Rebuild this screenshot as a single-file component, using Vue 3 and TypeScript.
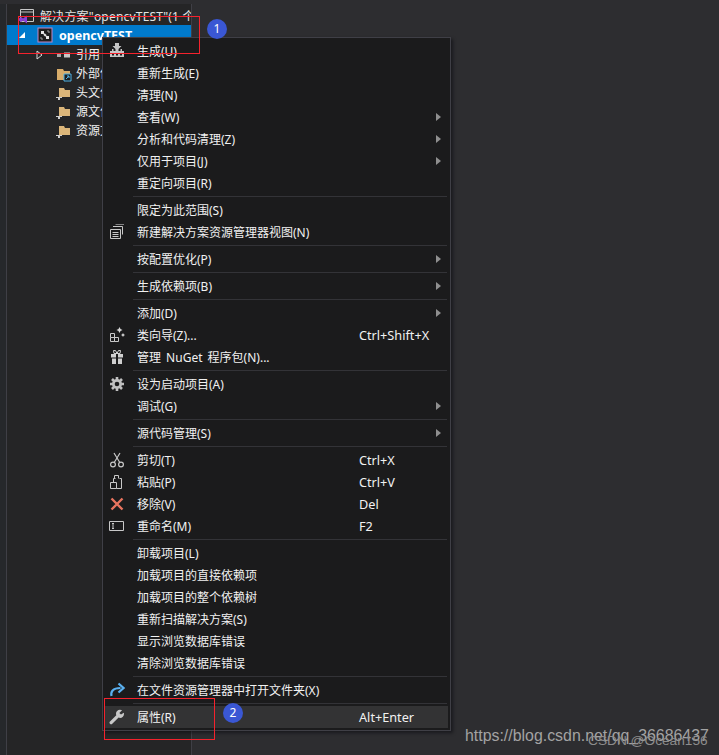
<script setup lang="ts">
type Row = { label?: string; key?: string; arrow?: boolean; icon?: string; sep?: boolean; active?: boolean };
const rows: Row[] = [
  { label: '生成(U)', icon: 'build' },
  { label: '重新生成(E)' },
  { label: '清理(N)' },
  { label: '查看(W)', arrow: true },
  { label: '分析和代码清理(Z)', arrow: true },
  { label: '仅用于项目(J)', arrow: true },
  { label: '重定向项目(R)' },
  { sep: true },
  { label: '限定为此范围(S)' },
  { label: '新建解决方案资源管理器视图(N)', icon: 'views' },
  { sep: true },
  { label: '按配置优化(P)', arrow: true },
  { sep: true },
  { label: '生成依赖项(B)', arrow: true },
  { sep: true },
  { label: '添加(D)', arrow: true },
  { label: '类向导(Z)...', key: 'Ctrl+Shift+X', icon: 'wizard' },
  { label: '管理 NuGet 程序包(N)...', icon: 'gift' },
  { sep: true },
  { label: '设为启动项目(A)', icon: 'gear' },
  { label: '调试(G)', arrow: true },
  { sep: true },
  { label: '源代码管理(S)', arrow: true },
  { sep: true },
  { label: '剪切(T)', key: 'Ctrl+X', icon: 'cut' },
  { label: '粘贴(P)', key: 'Ctrl+V', icon: 'paste' },
  { label: '移除(V)', key: 'Del', icon: 'remove' },
  { label: '重命名(M)', key: 'F2', icon: 'rename' },
  { sep: true },
  { label: '卸载项目(L)' },
  { label: '加载项目的直接依赖项' },
  { label: '加载项目的整个依赖树' },
  { label: '重新扫描解决方案(S)' },
  { label: '显示浏览数据库错误' },
  { label: '清除浏览数据库错误' },
  { sep: true },
  { label: '在文件资源管理器中打开文件夹(X)', icon: 'open' },
  { sep: true },
  { label: '属性(R)', key: 'Alt+Enter', icon: 'wrench', active: true },
];
const folders = ['头文件', '源文件', '资源文件'];
</script>

<template>
  <div class="page">
    <aside class="strip"></aside>
    <section class="panel">
      <div class="tree-row solution">
        <svg class="t-icon" width="16" height="16" viewBox="0 0 16 16">
          <path d="M1.500 1.500h13v12h-13zM1.500 4h13" fill="none" stroke="#c8c8c8" />
          <path d="M0 10.500l2-1.500 2 1.500 4-3v8l-4-3-2 1.500-2-1.500z" fill="#8a3fd8" />
        </svg>
        <span class="t-text">解决方案"opencvTEST"(1 个项目)</span>
      </div>
      <div class="tree-row project">
        <svg class="expander" width="8" height="8" viewBox="0 0 8 8"><path d="M7 1v6H1z" fill="#fff" /></svg>
        <svg class="t-icon" width="16" height="16" viewBox="0 0 16 16">
          <rect x="1" y="1" width="14" height="14" fill="#1e1e1e" stroke="#c586c0" />
          <path d="M4 4h3v3H4zM9 9h3v3H9z" fill="#e6e6e6" />
          <path d="M7 7l2 2" stroke="#e6e6e6" stroke-width="2" />
          <path d="M10 4h2v2M4 10v2h2" stroke="#9a9a9a" fill="none" />
        </svg>
        <b class="t-text">opencvTEST</b>
      </div>
      <div class="tree-row refs">
        <svg class="collapsed" width="7" height="10" viewBox="0 0 7 10"><path d="M1 1l5 4-5 4z" fill="none" stroke="#d8d8d8" /></svg>
        <svg class="t-icon" width="16" height="16" viewBox="0 0 16 16"><path d="M1 6h4v4H1z" fill="#a8a8a8" /><path d="M8 5.500h6v5H8z" fill="#c8c8c8" /></svg>
        <span class="t-text">引用</span>
      </div>
      <div class="tree-row child">
        <svg class="t-icon" width="16" height="16" viewBox="0 0 16 16">
          <path d="M1 3h6l1 2h6v9H1z" fill="#d8ac6a" />
          <path d="M8 8h7v7H8z" fill="#1e1e1e" stroke="#4fb3e8" />
          <path d="M10 13l3-3M11 10h2v2" stroke="#4fb3e8" fill="none" />
        </svg>
        <span class="t-text">外部依赖项</span>
      </div>
      <div v-for="f in folders" :key="f" class="tree-row child">
        <svg class="t-icon" width="16" height="16" viewBox="0 0 16 16">
          <path d="M3 3h5l1 2h5v7H3z" fill="#dcb67a" />
          <path d="M0 12h6v1H0z" fill="#d0d0d0" />
          <path d="M2 13h2v2H2z" fill="#d0d0d0" />
        </svg>
        <span class="t-text">{{ f }}</span>
      </div>
    </section>

    <nav class="menu">
      <template v-for="(r, i) in rows" :key="i">
        <div v-if="r.sep" class="sep"></div>
        <div v-else class="item" :class="{ active: r.active }">
          <span class="ico">
            <svg v-if="r.icon === 'build'" width="16" height="16" viewBox="0 0 16 16">
              <path d="M6 0h4v3h2.500L8 7.500 3.500 3H6z" fill="#c4c4c4" />
              <path d="M1 8h2v-2h1.500v2h2v-2h3v2h2v-2H13v2h2v6H1z" fill="#c4c4c4" />
              <path d="M3 11h2v1.500H3zM7 11h2v1.500H7zM11 11h2v1.500h-2z" fill="#1b1b1c" />
            </svg>
            <svg v-else-if="r.icon === 'views'" width="16" height="16" viewBox="0 0 16 16" fill="none" stroke="#c8c8c8">
              <path d="M1.500 5.500h10v9h-10z" />
              <path d="M4 2.500h9.500v8" />
              <path d="M6.500 .5h8.500" opacity=".6" />
              <path d="M3.500 8.500h6M3.500 10.500h6M3.500 12.500h6" />
            </svg>
            <svg v-else-if="r.icon === 'wizard'" width="16" height="16" viewBox="0 0 16 16" fill="none" stroke="#c8c8c8">
              <path d="M1.500 6.500h4v4h-4zM1.500 10.500v4h4v-4M5.500 10.500h4v4h-4z" />
              <path d="M10.500 0l1 2 2 1-2 1-1 2-1-2-2-1 2-1z" fill="#d8d8d8" stroke="none" />
              <path d="M14 6l.7 1.300L16 8l-1.300.7L14 10l-.7-1.300L12 8l1.300-.7z" fill="#d8d8d8" stroke="none" />
            </svg>
            <svg v-else-if="r.icon === 'gift'" width="16" height="16" viewBox="0 0 16 16">
              <path d="M2 5h12v3.500H2zM3 9.500h10V15H3z" fill="#cfcfcf" />
              <path d="M7 5h2v10H7z" fill="#1b1b1c" />
              <path d="M4.500 1.500h2l1.500 3h-3zM11.500 1.500h-2L8 4.500h3z" fill="none" stroke="#cfcfcf" />
            </svg>
            <svg v-else-if="r.icon === 'gear'" width="16" height="16" viewBox="0 0 16 16">
              <path d="M8 1v14M1 8h14M3 3l10 10M13 3L3 13" stroke="#c0c0c0" stroke-width="2.600" />
              <circle cx="8" cy="8" r="5" fill="#c0c0c0" />
              <circle cx="8" cy="8" r="2.300" fill="#1b1b1c" />
            </svg>
            <svg v-else-if="r.icon === 'cut'" width="16" height="16" viewBox="0 0 16 16" fill="none" stroke="#c8c8c8" stroke-width="1.200">
              <circle cx="4" cy="12.500" r="2.400" />
              <circle cx="12" cy="12.500" r="2.400" />
              <path d="M5.200 10.500L11 1M10.800 10.500L5 1" />
            </svg>
            <svg v-else-if="r.icon === 'paste'" width="16" height="16" viewBox="0 0 16 16" fill="none" stroke="#c8c8c8">
              <path d="M1.500 8.500h6v6h-6zM7.500 14.500h5v-10h-2M4.500 8.500v-4h2M5.500 4.500v-3h4v3" />
            </svg>
            <svg v-else-if="r.icon === 'remove'" width="16" height="16" viewBox="0 0 16 16">
              <path d="M2.500 2.500l11 11M13.500 2.500l-11 11" stroke="#e8745f" stroke-width="2.400" />
            </svg>
            <svg v-else-if="r.icon === 'rename'" width="16" height="16" viewBox="0 0 16 16" fill="none" stroke="#c8c8c8">
              <path d="M.5 3.500h14v9H.5zM3 5.500h2M3 10.500h2M4 5.500v5" />
            </svg>
            <svg v-else-if="r.icon === 'open'" width="16" height="16" viewBox="0 0 16 16" fill="none">
              <path d="M2.500 14c-1-4 1-8 9-8" stroke="#5ab0f0" stroke-width="2.200" />
              <path d="M9.500 1.500L14.500 6l-5 4.500" stroke="#5ab0f0" stroke-width="2.200" />
            </svg>
            <svg v-else-if="r.icon === 'wrench'" width="16" height="16" viewBox="0 0 16 16">
              <path d="M11 .8c-2.300 0-4 1.700-4 3.900 0 .6.100 1 .3 1.500L1 12.500c-.7.700-.7 1.700 0 2.300.6.700 1.700.7 2.300 0l6.300-6.200c.5.200 1 .3 1.500.3 2.200 0 3.900-1.700 3.900-4 0-.4 0-.8-.2-1.200L12 5.600 10.300 4l2.800-2.700c-.6-.3-1.300-.5-2.100-.5z" fill="#c8c8c8" />
            </svg>
          </span>
          <span class="label">{{ r.label }}</span>
          <span v-if="r.key" class="shortcut">{{ r.key }}</span>
          <svg v-if="r.arrow" class="arrow" width="5" height="8" viewBox="0 0 5 8"><path d="M0 0l5 4-5 4z" fill="#8f8f8f" /></svg>
        </div>
      </template>
    </nav>

    <div class="mark mark-1"></div>
    <div class="mark mark-2"></div>
    <div class="badge badge-1">1</div>
    <div class="badge badge-2">2</div>
    <div class="wm url">https://blog.csdn.net/qq_36686437</div>
    <div class="wm author">CSDN @Ocean156</div>
  </div>
</template>

<style>
html, body { margin: 0; background: #2d2d30; }
</style>

<style scoped>
.page {
  position: relative;
  width: 719px;
  height: 755px;
  overflow: hidden;
  display: flex;
  background: #2d2d30;
  font-family: "Noto Sans", "Noto Sans CJK SC", sans-serif;
  font-size: 12px;
  color: #f1f1f1;
}
.strip {
  width: 6px;
  margin-top: 4px;
  background: #26282b;
}
.panel {
  width: 186px;
  margin-top: 4px;
  padding-top: 3px;
  box-sizing: border-box;
  background: #252526;
  border-left: 1px solid #3f3f46;
  border-right: 1px solid #3f3f46;
  overflow: hidden;
}
.tree-row {
  display: flex;
  align-items: center;
  height: 19px;
  white-space: nowrap;
}
.t-icon { flex: none; }
.t-text { margin-left: 6px; line-height: 19px; }
.solution { padding-left: 12px; height: 18px; }
.solution .t-text { margin-left: 5px; color: #e4e4e4; letter-spacing: .2px; }
.project {
  height: 20px;
  padding-left: 11px;
  background: #007acc;
  color: #fff;
}
.project .t-icon { margin-left: 11px; }
.project .t-text { margin-left: 6px; font-size: 12.500px; }
.expander { flex: none; }
.refs { padding-left: 29px; }
.refs .t-icon { margin-left: 13px; }
.refs .t-text { margin-left: 4px; }
.child { padding-left: 49px; }
.child .t-text { margin-left: 4px; }

.menu {
  position: absolute;
  left: 102px;
  top: 37px;
  width: 349px;
  height: 694px;
  box-sizing: border-box;
  padding: 2px;
  background: #1b1b1c;
  border: 1px solid #3f3f46;
  box-shadow: 2px 2px 3px rgba(10, 10, 14, .55);
}
.item {
  position: relative;
  display: flex;
  align-items: center;
  height: 22px;
  white-space: nowrap;
  line-height: 22px;
}
.item.active { background: #333334; }
.ico {
  width: 24px;
  margin-right: 8px;
  display: flex;
  justify-content: center;
  flex: none;
}
.label { padding-top: 2px; word-spacing: 2px; }
.shortcut {
  position: absolute;
  left: 254px;
  top: 0;
  font-size: 12.700px;
}
.arrow {
  position: absolute;
  left: 331px;
  top: 7px;
}
.sep {
  height: 1px;
  margin: 2px 1px 2px 28px;
  background: #333337;
}
.mark {
  position: absolute;
  box-sizing: border-box;
  border: 1px solid #f5222d;
}
.mark-1 { left: 18px; top: 16px; width: 182px; height: 38px; }
.mark-2 { left: 104px; top: 698px; width: 111px; height: 42px; }
.badge {
  position: absolute;
  width: 20px;
  height: 20px;
  border-radius: 50%;
  background: #3a57d4;
  color: #fff;
  text-align: center;
  line-height: 20px;
  font-size: 12px;
}
.badge-1 { left: 207px; top: 19px; }
.badge-2 { left: 223px; top: 703px; }
.wm {
  position: absolute;
  white-space: nowrap;
  font-family: "Liberation Sans", sans-serif;
}
.url { left: 465px; top: 727px; font-size: 15.900px; color: #a3a3a3; }
.author { left: 588px; top: 733px; font-size: 13.700px; color: #8c8c8c; }
</style>
